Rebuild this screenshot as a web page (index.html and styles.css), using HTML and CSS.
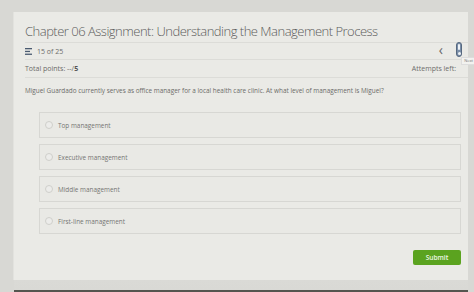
FILE: index.html
```html
<!DOCTYPE html>
<html>
<head>
<meta charset="utf-8">
<link rel="stylesheet" href="styles.css">
</head>
<body>
<div class="screen">
  <div class="card">
    <header class="head">
      <h1 class="title">Chapter 06 Assignment: Understanding the Management Process</h1>
      <div class="row nav-row">
        <div class="progress">
          <svg class="list-icon" width="8" height="7" viewBox="0 0 8 7"><rect x="0" y="0" width="7" height="1.3" fill="#4a5a70"/><rect x="0" y="2.8" width="5" height="1.3" fill="#4a5a70"/><rect x="0" y="5.6" width="7" height="1.3" fill="#4a5a70"/></svg>
          <span>15 of 25</span>
        </div>
        <div class="nav">
          <span class="prev">&lsaquo;</span>
          <span class="next-btn"><span class="bar"></span><span class="dot"></span></span>
        </div>
      </div>
      <div class="row points-row">
        <span>Total points: --/<b>5</b></span>
        <span class="attempts">Attempts left: <span class="tip">Next</span></span>
      </div>
    </header>
    <p class="question">Miguel Guardado currently serves as office manager for a local health care clinic. At what level of management is Miguel?</p>
    <div class="options">
      <label class="option"><span class="radio"></span>Top management</label>
      <label class="option"><span class="radio"></span>Executive management</label>
      <label class="option"><span class="radio"></span>Middle management</label>
      <label class="option"><span class="radio"></span>First-line management</label>
    </div>
    <div class="actions">
      <button class="submit">Submit</button>
    </div>
  </div>
  <div class="floor"></div>
</div>
</body>
</html>
```
FILE: styles.css
```css
* { box-sizing: border-box; }
html, body { margin: 0; padding: 0; }
body {
  width: 474px;
  height: 292px;
  overflow: hidden;
  background: #d8d8d4;
  font-family: "Open Sans", "Liberation Sans", sans-serif;
  color: #6a6a68;
}
.screen {
  padding: 12px 6px 0 14px;
  height: 292px;
  display: flex;
  flex-direction: column;
}
.card {
  background: #eaeae6;
  height: 268px;
  padding: 0 0 0 11px;
  display: flex;
  flex-direction: column;
  box-shadow: -1px 0 0 #e2e2de;
}
.head { padding-top: 10px; }
.title {
  margin: 0;
  font-size: 13px;
  font-weight: 300;
  line-height: 19px;
  color: #5c5c5c;
  letter-spacing: -0.5px;
  border-bottom: 1px solid #dcdcd8;
  padding-bottom: 1px;
}
.row {
  display: flex;
  justify-content: space-between;
  align-items: center;
  border-bottom: 1px solid #dcdcd8;
  font-size: 7px;
  padding-right: 4px;
}
.nav-row { height: 17px; }
.points-row { height: 18px; }
.progress { display: flex; align-items: center; gap: 4px; color: #6d6d6b; }
.list-icon { display: block; }
.nav { display: flex; align-items: center; gap: 13px; position: relative; margin-right: 2px; }
.prev { font-size: 14px; color: #666; line-height: 10px; margin-top: -2px; }
.next-btn {
  width: 6px;
  height: 15px;
  border-radius: 3px;
  background: #7a8ea8;
  border: 1px solid #56687f;
  display: flex;
  flex-direction: column;
  align-items: center;
  justify-content: space-between;
  padding: 1px 0;
  margin-top: -3px;
}
.next-btn .bar { width: 2px; height: 6px; background: #eef2f6; border-radius: 1px; }
.next-btn .dot { width: 3px; height: 3px; border-radius: 50%; background: #eef2f6; }
.points-row b { font-weight: 700; color: #555; }
.attempts { position: relative; padding-right: 8px; color: #6d6d6b; }
.tip {
  position: absolute;
  right: -12px;
  top: -7px;
  font-size: 4px;
  color: #777;
  background: #f2f2ef;
  border: 1px solid #ddd;
  padding: 0 2px;
  line-height: 6px;
}
.question {
  margin: 8px 0 0;
  font-size: 6.4px;
  color: #6a6a68;
  line-height: 9px;
}
.options {
  margin: 17px 0 0 14px;
  width: 422px;
  display: flex;
  flex-direction: column;
  gap: 6px;
}
.option {
  height: 26px;
  border: 1px solid #d7d7d3;
  background: #e9e9e5;
  display: flex;
  align-items: center;
  padding-left: 5px;
  font-size: 6.4px;
  color: #757573;
}
.radio {
  width: 8px;
  height: 8px;
  border-radius: 50%;
  border: 1px solid #cfcfcb;
  background: #ececea;
  margin-right: 5px;
}
.actions {
  display: flex;
  justify-content: flex-end;
  width: 436px;
  margin-top: 16px;
}
.submit {
  width: 48px;
  height: 15px;
  border: none;
  border-radius: 2px;
  background: #5ba31f;
  color: #eef7e6;
  font-family: "Open Sans", "Liberation Sans", sans-serif;
  font-size: 6.6px;
  font-weight: 600;
  padding: 0;
}
.floor {
  flex: 1;
  background: linear-gradient(#dadad6 0, #d9d9d5 80%, #55554f 80%);
}
```
